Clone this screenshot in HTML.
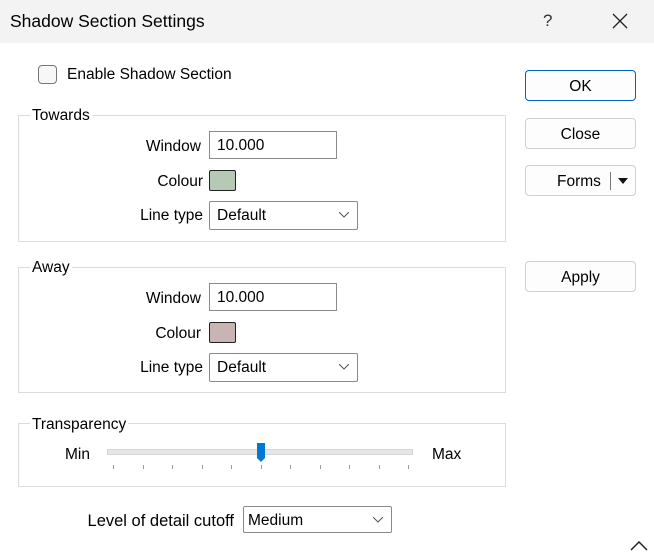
<!DOCTYPE html>
<html><head><style>
*{box-sizing:border-box;margin:0;padding:0}
body{width:654px;height:558px;background:#fff;font-family:"Liberation Sans",sans-serif;font-size:15.5px;color:#000;position:relative;overflow:hidden}
.a{position:absolute}
.t{position:absolute;white-space:nowrap;line-height:18px}
.btn{position:absolute;left:525px;width:111px;height:31px;border:1px solid #d0d0d0;border-radius:4px;background:#fdfdfd;text-align:center;line-height:31px}
.grp{position:absolute;left:18px;width:488px;border:1px solid #dcdcdc}
.leg{position:absolute;background:#fff;padding:0 2px;line-height:18px}
.inp{position:absolute;left:209px;width:128px;height:28px;border:1px solid #8a8a8a;padding-left:7px;line-height:28px}
.sel{position:absolute;width:149px;height:29px;border:1px solid #8a8a8a;padding-left:7px;line-height:28px;border-radius:2px}
.sel svg{position:absolute;right:8px;top:10px}
.sw{position:absolute;left:209px;width:27px;height:21px;border:1px solid #222;border-radius:2px}
.tick{position:absolute;top:465px;width:1px;height:4px;background:#9a9a9a}
</style></head><body>
<div class="a" style="left:0;top:0;width:654px;height:43px;background:#f3f3f3"></div>
<div class="t" style="left:10px;top:12px;font-size:17.5px">Shadow Section Settings</div>
<div class="t" style="left:543px;top:12px;font-size:17px;color:#333">?</div>
<svg class="a" style="left:612px;top:13px" width="16" height="16"><path d="M1 1L15 15M15 1L1 15" stroke="#222" stroke-width="1.3"/></svg>
<div class="a" style="left:38px;top:65px;width:19px;height:19px;border:1px solid #777;border-radius:4px;background:#f7f7f7"></div>
<div class="t" style="left:67px;top:66px">Enable Shadow Section</div>
<div class="btn" style="top:70px;border:1px solid #0067c0">OK</div>
<div class="btn" style="top:118px">Close</div>
<div class="btn" style="top:165px;text-align:left;padding-left:31px">Forms<span class="a" style="left:84px;top:6px;width:1px;height:18px;background:#777"></span><svg class="a" style="left:92px;top:12px" width="10" height="7"><path d="M0 0H10L5 6Z" fill="#111"/></svg></div>
<div class="btn" style="top:261px">Apply</div>

<div class="grp" style="top:115px;height:127px"></div>
<div class="leg" style="left:30px;top:107px">Towards</div>
<div class="t" style="right:453px;top:138px">Window</div>
<div class="inp" style="top:131px">10.000</div>
<div class="t" style="right:451px;top:173px">Colour</div>
<div class="sw" style="top:170px;background:#b5c9b5"></div>
<div class="t" style="right:451px;top:207px">Line type</div>
<div class="sel" style="left:209px;top:201px">Default<svg width="10" height="6"><path d="M0 0L5 5L10 0" fill="none" stroke="#555"/></svg></div>

<div class="grp" style="top:267px;height:126px"></div>
<div class="leg" style="left:30px;top:259px">Away</div>
<div class="t" style="right:453px;top:290px">Window</div>
<div class="inp" style="top:283px">10.000</div>
<div class="t" style="right:453px;top:325px">Colour</div>
<div class="sw" style="top:322px;background:#c9b3b3"></div>
<div class="t" style="right:451px;top:359px">Line type</div>
<div class="sel" style="left:209px;top:353px">Default<svg width="10" height="6"><path d="M0 0L5 5L10 0" fill="none" stroke="#555"/></svg></div>

<div class="grp" style="top:423px;height:64px"></div>
<div class="leg" style="left:30px;top:416px">Transparency</div>
<div class="t" style="left:65px;top:446px">Min</div>
<div class="t" style="left:432px;top:446px">Max</div>
<div class="a" style="left:107px;top:449px;width:306px;height:6px;background:#e6e6e6;border:1px solid #d6d6d6"></div>
<svg class="a" style="left:256px;top:443px" width="10" height="20"><path d="M1 0H9V15L5 19L1 15Z" fill="#0078d4"/></svg>
<div class="tick" style="left:113px"></div><div class="tick" style="left:143px"></div><div class="tick" style="left:172px"></div><div class="tick" style="left:202px"></div><div class="tick" style="left:231px"></div><div class="tick" style="left:261px"></div><div class="tick" style="left:290px"></div><div class="tick" style="left:320px"></div><div class="tick" style="left:349px"></div><div class="tick" style="left:379px"></div><div class="tick" style="left:408px"></div>

<div class="t" style="right:420px;top:512px;font-size:16.5px">Level of detail cutoff</div>
<div class="sel" style="left:243px;top:506px;height:27px;line-height:27px;padding-left:4px">Medium<svg width="10" height="6" style="top:10px"><path d="M0 0L5 5L10 0" fill="none" stroke="#555"/></svg></div>
<svg class="a" style="left:630px;top:541px" width="18" height="10"><path d="M1 9L9 1L17 9" fill="none" stroke="#222" stroke-width="1.5"/></svg>
</body></html>
